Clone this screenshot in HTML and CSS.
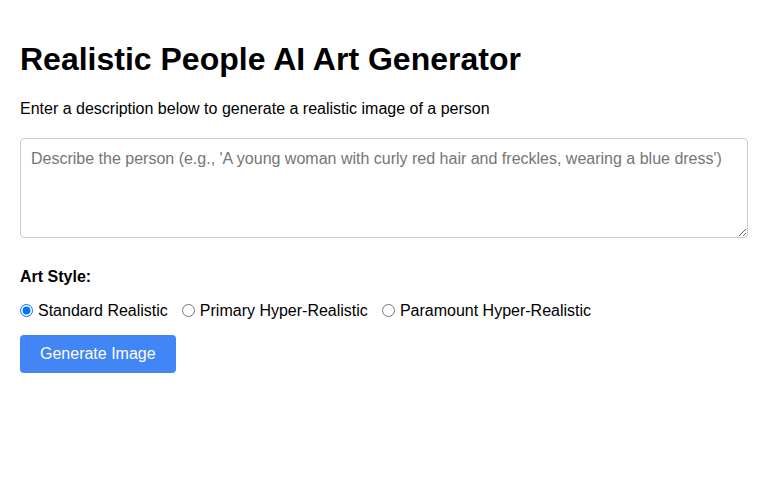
FILE: index.html
```html
<!DOCTYPE html>
<html lang="en">
<head>
<meta charset="utf-8">
<title>Realistic People AI Art Generator</title>
<link rel="stylesheet" href="styles.css">
</head>
<body>
<h1 class="title">Realistic People AI Art Generator</h1>
<p class="intro">Enter a description below to generate a realistic image of a person</p>
<textarea class="prompt" placeholder="Describe the person (e.g., 'A young woman with curly red hair and freckles, wearing a blue dress')"></textarea>
<div class="style-label">Art Style:</div>
<div class="options">
  <label class="option"><input type="radio" name="style" checked> Standard Realistic</label>
  <label class="option"><input type="radio" name="style"> Primary Hyper-Realistic</label>
  <label class="option"><input type="radio" name="style"> Paramount Hyper-Realistic</label>
</div>
<button class="generate">Generate Image</button>
</body>
</html>
```
FILE: styles.css
```css
html, body {
  background: #fff;
}
body {
  margin: 0;
  padding: 20px;
  font-family: "Liberation Sans", Arial, sans-serif;
  font-size: 16px;
  color: #000;
}
.title {
  font-size: 32px;
  font-weight: bold;
  margin: 21.44px 0;
}
.intro {
  margin: 16px 0 20px;
}
.prompt {
  display: block;
  box-sizing: border-box;
  width: 100%;
  height: 100px;
  padding: 11px 10px 9px;
  border: 1px solid #ccc;
  border-radius: 4px;
  font-family: "Liberation Sans", Arial, sans-serif;
  font-size: 16px;
  margin: 0 0 30px;
}
.prompt::placeholder {
  color: #757575;
}
.style-label {
  font-weight: bold;
  margin-bottom: 16px;
}
.options {
  display: flex;
  align-items: center;
  margin-bottom: 15px;
}
.option {
  display: flex;
  align-items: center;
  margin-right: 14px;
}
.option input {
  margin: 0 5px 0 0;
}
.generate {
  display: block;
  background: #4285f4;
  color: #fff;
  border: none;
  border-radius: 4px;
  padding: 10px 20px;
  font-family: "Liberation Sans", Arial, sans-serif;
  font-size: 16px;
  line-height: 18px;
}
```
